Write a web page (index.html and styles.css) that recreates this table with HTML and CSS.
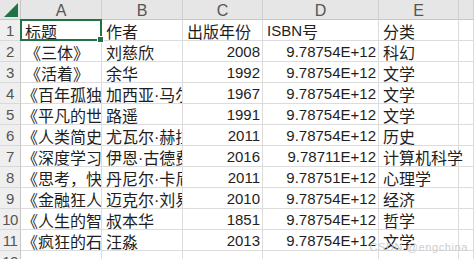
FILE: index.html
```html
<!DOCTYPE html>
<html lang="zh">
<head>
<meta charset="utf-8">
<link rel="stylesheet" href="styles.css">
</head>
<body>
<div class="sheet">
  <div class="corner"><span class="tri"></span></div>
  <div class="ch">A</div><div class="ch">B</div><div class="ch">C</div><div class="ch">D</div><div class="ch">E</div><div class="ch"></div>

  <div class="rh">1</div><div class="c sel">标题</div><div class="c">作者</div><div class="c">出版年份</div><div class="c"><span class="n">ISBN</span>号</div><div class="c e">分类</div><div class="c"></div>
  <div class="rh">2</div><div class="c t sp">《三体》</div><div class="c">刘慈欣</div><div class="c r"><span class="n">2008</span></div><div class="c r"><span class="n">9.78754E+12</span></div><div class="c e">科幻</div><div class="c"></div>
  <div class="rh">3</div><div class="c t sp">《活着》</div><div class="c">余华</div><div class="c r"><span class="n">1992</span></div><div class="c r"><span class="n">9.78754E+12</span></div><div class="c e">文学</div><div class="c"></div>
  <div class="rh">4</div><div class="c t">《百年孤独》</div><div class="c">加西亚·马尔克斯</div><div class="c r"><span class="n">1967</span></div><div class="c r"><span class="n">9.78754E+12</span></div><div class="c e">文学</div><div class="c"></div>
  <div class="rh">5</div><div class="c t">《平凡的世界》</div><div class="c">路遥</div><div class="c r"><span class="n">1991</span></div><div class="c r"><span class="n">9.78754E+12</span></div><div class="c e">文学</div><div class="c"></div>
  <div class="rh">6</div><div class="c t">《人类简史》</div><div class="c">尤瓦尔·赫拉利</div><div class="c r"><span class="n">2011</span></div><div class="c r"><span class="n">9.78754E+12</span></div><div class="c e">历史</div><div class="c"></div>
  <div class="rh">7</div><div class="c t">《深度学习》</div><div class="c">伊恩·古德费洛</div><div class="c r"><span class="n">2016</span></div><div class="c r"><span class="n">9.78711E+12</span></div><div class="c e">计算机科学</div><div class="c"></div>
  <div class="rh">8</div><div class="c t">《思考，快与慢》</div><div class="c">丹尼尔·卡尼曼</div><div class="c r"><span class="n">2011</span></div><div class="c r"><span class="n">9.78751E+12</span></div><div class="c e">心理学</div><div class="c"></div>
  <div class="rh">9</div><div class="c t">《金融狂人》</div><div class="c">迈克尔·刘易斯</div><div class="c r"><span class="n">2010</span></div><div class="c r"><span class="n">9.78754E+12</span></div><div class="c e">经济</div><div class="c"></div>
  <div class="rh">10</div><div class="c t">《人生的智慧》</div><div class="c">叔本华</div><div class="c r"><span class="n">1851</span></div><div class="c r"><span class="n">9.78754E+12</span></div><div class="c e">哲学</div><div class="c"></div>
  <div class="rh">11</div><div class="c t">《疯狂的石头》</div><div class="c">汪淼</div><div class="c r"><span class="n">2013</span></div><div class="c r"><span class="n">9.78754E+12</span></div><div class="c e">文学</div><div class="c"></div>
  <div class="rh">12</div><div class="c"></div><div class="c"></div><div class="c"></div><div class="c"></div><div class="c"></div><div class="c"></div>
  <div class="wm">CSDN @engchina</div>
</div>
</body>
</html>
```
FILE: styles.css
```css
html, body {
  margin: 0;
  padding: 0;
  background: #ffffff;
  overflow: hidden;
}
.sheet {
  position: relative;
  display: grid;
  grid-template-columns: 21px 81px 81px 80px 116px 80px 15px;
  grid-template-rows: 20px repeat(12, 21px);
  width: 474px;
  height: 259px;
  font-family: "Liberation Sans", "Noto Sans CJK SC", sans-serif;
  color: #1e1e1e;
  overflow: hidden;
}
.corner {
  background: #e6e6e6;
  border-right: 1px solid #c6c6c6;
  border-bottom: 1px solid #c6c6c6;
  position: relative;
}
.tri {
  position: absolute;
  right: 2px;
  bottom: 2px;
  width: 0;
  height: 0;
  border-left: 14px solid transparent;
  border-bottom: 14px solid #217346;
}
.ch {
  background: #e6e6e6;
  border-right: 1px solid #d0d0d0;
  border-bottom: 1px solid #c6c6c6;
  display: flex;
  align-items: center;
  justify-content: center;
  font-family: "Liberation Sans", sans-serif;
  font-size: 16px;
  color: #555;
  padding-top: 3px;
}
.rh {
  background: #efefef;
  border-right: 1px solid #c6c6c6;
  border-bottom: 1px solid #d9d9d9;
  display: flex;
  align-items: center;
  justify-content: center;
  font-size: 15px;
  color: #555;
  letter-spacing: -0.5px;
}
.c {
  border-right: 1px solid #dcdcdc;
  border-bottom: 1px solid #dcdcdc;
  display: flex;
  align-items: center;
  padding: 1px 3px 0 4px;
  font-size: 16px;
  white-space: nowrap;
  overflow: hidden;
  min-width: 0;
}
.c.t {
  padding-left: 1px;
  padding-right: 0;
}
.c.t.sp {
  padding-left: 4px;
}
.c.e {
  overflow: visible;
  position: relative;
  z-index: 1;
}
.c.r {
  justify-content: flex-end;
  padding-right: 2px;
}
.n {
  font-size: 15px;
}
.sel {
  position: relative;
  overflow: visible;
}
.sel::after {
  content: "";
  position: absolute;
  left: -1px;
  top: -1px;
  right: -1px;
  bottom: -1px;
  border: 2px solid #217346;
}
.sel::before {
  content: "";
  position: absolute;
  right: -3px;
  bottom: -3px;
  width: 5px;
  height: 5px;
  background: #217346;
  border: 1px solid #fff;
  z-index: 2;
}
.wm {
  position: absolute;
  right: 6px;
  bottom: 6px;
  font-size: 11px;
  letter-spacing: 0.6px;
  color: #cdcdcd;
  font-family: "Liberation Sans", sans-serif;
  z-index: 3;
}
```
